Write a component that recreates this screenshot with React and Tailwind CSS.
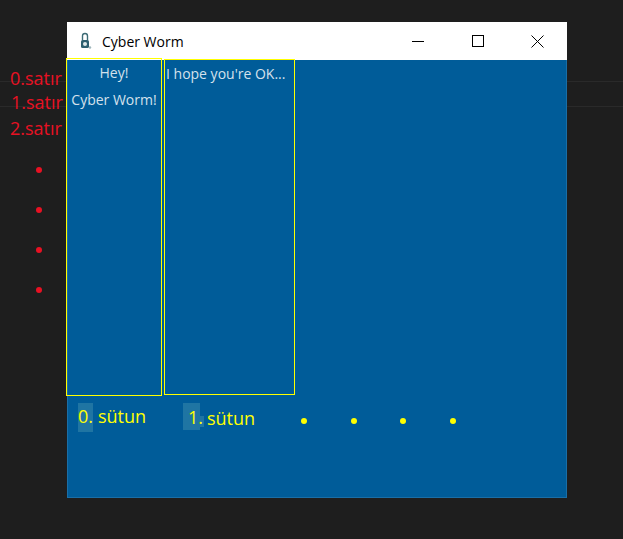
const font = { fontFamily: '"Open Sans", sans-serif' };

function RedLabels() {
  return (
    <div className="absolute left-0 top-0 w-[67px] whitespace-nowrap text-[18px] leading-[24px] text-[#e81123]">
      <div className="pl-[10px] pt-[66px]">0.satır</div>
      <div className="pl-[11px]">1.satır</div>
      <div className="pl-[10px] pt-[2px]">2.satır</div>
      <div className="flex flex-col gap-[34px] pl-[36px] pt-[27px]">
        <span className="h-[6px] w-[6px] rounded-full bg-[#e81123]" />
        <span className="h-[6px] w-[6px] rounded-full bg-[#e81123]" />
        <span className="h-[6px] w-[6px] rounded-full bg-[#e81123]" />
        <span className="h-[6px] w-[6px] rounded-full bg-[#e81123]" />
      </div>
    </div>
  );
}

function TitleBar() {
  return (
    <div className="flex h-[38px] items-center bg-white">
      <svg className="ml-[12px]" width="13" height="18" viewBox="0 0 13 18" fill="none">
        <path d="M3.5 8V4a2.5 2.5 0 0 1 5 0V8" stroke="#3d6b75" strokeWidth="1.4" />
        <rect x="2" y="8" width="8" height="8" rx="1.5" fill="#2f6070" />
        <circle cx="6" cy="12" r="2" fill="#dfe9ea" />
        <circle cx="11" cy="15.5" r="1.2" fill="#9fb6bb" />
      </svg>
      <span className="ml-[10px] text-[14px] text-black">Cyber Worm</span>
      <div className="ml-auto flex h-full items-center">
        <div className="flex h-full w-[60px] items-center justify-center">
          <span className="h-px w-[12px] bg-black" />
        </div>
        <div className="flex h-full w-[59px] items-center justify-center">
          <span className="h-[12px] w-[12px] border border-black" />
        </div>
        <div className="flex h-full w-[60px] items-center justify-center">
          <svg width="13" height="13" viewBox="0 0 13 13" stroke="#000" strokeWidth="1">
            <path d="M0.5 0.5 12.5 12.5M12.5 0.5 0.5 12.5" />
          </svg>
        </div>
      </div>
    </div>
  );
}

export default function App() {
  return (
    <div className="relative h-[539px] w-[623px] overflow-hidden bg-[#1e1e1e]" style={font}>
      <div className="absolute left-0 right-0 top-[81px] h-px bg-[#2a2a2a]" />
      <div className="absolute left-0 right-0 top-[106px] h-px bg-[#2a2a2a]" />
      <RedLabels />

      {/* the app window */}
      <div className="absolute left-[67px] top-[22px] flex h-[476px] w-[500px] flex-col">
        <TitleBar />
        <div className="flex-1 border-b border-l border-r border-[#1a6ea6] bg-[#005c99]">
          <div className="-ml-[2px] -mt-[2px] flex items-start gap-[2px]">
            <div className="h-[338px] w-[96px] border border-[#ffff00] text-center text-[14px] font-medium leading-[27px] text-[#d4e1ec]">
              <div>Hey!</div>
              <div className="whitespace-nowrap">Cyber Worm!</div>
            </div>
            <div className="mt-[1px] h-[336px] w-[131px] whitespace-nowrap border border-[#ffff00] pl-[1px] text-[14px] font-medium leading-[27px] text-[#d4e1ec]">
              I hope you're OK...
            </div>
          </div>

          <div className="mt-[7px] flex items-start pl-[10px] text-[18px] leading-[29px] text-[#ffff00]">
            <div className="flex h-[29px] w-[105px] items-center">
              <span className="h-[29px] w-[15px] bg-[#1f75a3]">
                <span className="relative -top-[1px]">0.</span>
              </span>
              <span className="relative -top-[1px] ml-[5px]">sütun</span>
            </div>
            <div className="flex h-[27px] items-center">
              <span className="relative h-[27px] w-[17px] bg-[#1f75a3] pl-[5px]">
                <span className="absolute left-[17px] top-[13px] h-[11px] w-[4px] bg-[#1f75a3]" />
                <span className="relative">1.</span>
              </span>
              <span className="ml-[7px] pt-[4px]">sütun</span>
            </div>
            <div className="ml-[46px] mt-[15px] flex gap-[43.6px]">
              <span className="h-[6px] w-[6px] rounded-full bg-[#ffff00]" />
              <span className="h-[6px] w-[6px] rounded-full bg-[#ffff00]" />
              <span className="h-[6px] w-[6px] rounded-full bg-[#ffff00]" />
              <span className="h-[6px] w-[6px] rounded-full bg-[#ffff00]" />
            </div>
          </div>
        </div>
      </div>
    </div>
  );
}
